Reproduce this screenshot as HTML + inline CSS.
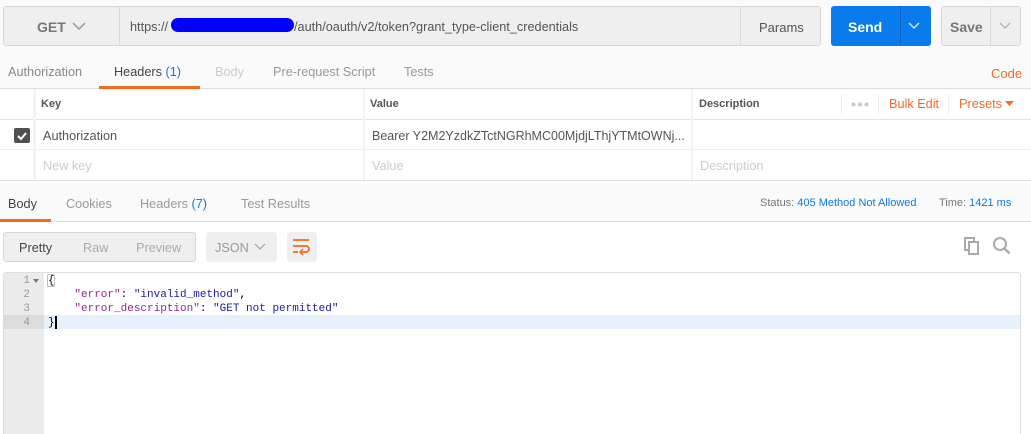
<!DOCTYPE html>
<html><head><style>
*{margin:0;padding:0;box-sizing:border-box}
body{width:1031px;height:434px;background:#fafafa;font-family:"Liberation Sans",sans-serif;font-size:12px;color:#505050;position:relative;overflow:hidden}
.a{position:absolute;white-space:nowrap}
.box{position:absolute;border:1px solid #d8d8d8;border-radius:3px;background:#efefef}
.mono{font-family:"Liberation Mono",monospace;font-size:11px}
</style></head><body>
<div class="box" style="left:3px;top:6px;width:818px;height:40px"></div>
<div class="a" style="left:119px;top:7px;width:1px;height:38px;background:#d8d8d8"></div>
<div class="a" style="left:740px;top:7px;width:1px;height:38px;background:#d8d8d8"></div>
<div class="a" style="left:37px;top:19px;font-size:14px;font-weight:bold;color:#777">GET</div>
<svg class="a" style="left:72px;top:22px" width="14" height="9"><path d="M1 1l6 6 6-6" stroke="#999" stroke-width="1.5" fill="none"/></svg>
<div class="a" style="left:130px;top:20px;font-size:12.7px;color:#555">https://</div>
<div class="a" style="left:171px;top:18px;width:123px;height:14px;background:#0000ff;border-radius:7px"></div>
<div class="a" style="left:294px;top:20px;font-size:12.7px;color:#555">/auth/oauth/v2/token?grant_type-client_credentials</div>
<div class="a" style="left:759px;top:20px;font-size:13px;color:#555">Params</div>
<div class="a" style="left:831px;top:6px;width:100px;height:40px;background:#097bed;border-radius:3px"></div>
<div class="a" style="left:900px;top:6px;width:1px;height:40px;background:#0a63c0"></div>
<div class="a" style="left:848px;top:19px;font-size:14px;font-weight:bold;color:#fff">Send</div>
<svg class="a" style="left:908px;top:22px" width="12" height="8"><path d="M1 1l5 5 5-5" stroke="#cfe3fb" stroke-width="1.5" fill="none"/></svg>
<div class="box" style="left:941px;top:6px;width:80px;height:40px"></div>
<div class="a" style="left:990px;top:7px;width:1px;height:38px;background:#d8d8d8"></div>
<div class="a" style="left:950px;top:19px;font-size:14px;font-weight:bold;color:#777">Save</div>
<svg class="a" style="left:999px;top:22px" width="12" height="8"><path d="M1 1l5 5 5-5" stroke="#aaa" stroke-width="1.2" fill="none"/></svg>
<div class="a" style="left:8px;top:65px;font-size:12.7px;color:#888">Authorization</div>
<div class="a" style="left:114px;top:65px;font-size:12.7px;color:#444">Headers <span style="color:#097bed">(1)</span></div>
<div class="a" style="left:215px;top:65px;font-size:12.7px;color:#ccc">Body</div>
<div class="a" style="left:273px;top:65px;font-size:12.7px;color:#999">Pre-request Script</div>
<div class="a" style="left:404px;top:65px;font-size:12.7px;color:#999">Tests</div>
<div class="a" style="left:991px;top:66px;font-size:13px;color:#f26b21">Code</div>
<div class="a" style="left:0;top:88px;width:1031px;height:1px;background:#ddd"></div>
<div class="a" style="left:99px;top:86px;width:101px;height:3px;background:#f26b21"></div>
<div class="a" style="left:0;top:89px;width:1031px;height:91px;background:#fff"></div>
<div class="a" style="left:0;top:119px;width:1031px;height:1px;background:#e3e3e3"></div>
<div class="a" style="left:0;top:149px;width:1031px;height:1px;background:#eee"></div>
<div class="a" style="left:0;top:180px;width:1031px;height:1px;background:#e3e3e3"></div>
<div class="a" style="left:33px;top:89px;width:3px;height:91px;background:#f4f4f4"></div>
<div class="a" style="left:363px;top:89px;width:2px;height:91px;background:#f4f4f4"></div>
<div class="a" style="left:691px;top:89px;width:2px;height:91px;background:#f4f4f4"></div>
<div class="a" style="left:41px;top:98px;font-size:11px;font-weight:bold;color:#555">Key</div>
<div class="a" style="left:370px;top:98px;font-size:11px;font-weight:bold;color:#555">Value</div>
<div class="a" style="left:699px;top:98px;font-size:11px;font-weight:bold;color:#555">Description</div>
<div class="a" style="left:841px;top:95px;width:1px;height:20px;background:#eee"></div>
<div class="a" style="left:878px;top:95px;width:1px;height:20px;background:#eee"></div>
<div class="a" style="left:948px;top:95px;width:1px;height:20px;background:#eee"></div>
<svg class="a" style="left:851px;top:102px" width="18" height="5"><circle cx="2.5" cy="2.5" r="2" fill="#c8c8c8"/><circle cx="9" cy="2.5" r="2" fill="#c8c8c8"/><circle cx="15.5" cy="2.5" r="2" fill="#c8c8c8"/></svg>
<div class="a" style="left:889px;top:97px;font-size:12.7px;color:#f26b21">Bulk Edit</div>
<div class="a" style="left:959px;top:97px;font-size:12.7px;color:#f26b21">Presets</div>
<svg class="a" style="left:1005px;top:101px" width="9" height="6"><path d="M0 0h9l-4.5 5z" fill="#f26b21"/></svg>
<div class="a" style="left:14px;top:128px;width:16px;height:15px;background:#505050;border-radius:2px"></div>
<svg class="a" style="left:14px;top:128px" width="16" height="15"><path d="M4 8l3 3 5-6" stroke="#fff" stroke-width="2" fill="none"/></svg>
<div class="a" style="left:43px;top:129px;font-size:12.7px;color:#555">Authorization</div>
<div class="a" style="left:372px;top:129px;font-size:12.5px;color:#555">Bearer Y2M2YzdkZTctNGRhMC00MjdjLThjYTMtOWNj...</div>
<div class="a" style="left:43px;top:159px;font-size:12.7px;color:#ccc">New key</div>
<div class="a" style="left:372px;top:159px;font-size:12.7px;color:#ccc">Value</div>
<div class="a" style="left:700px;top:159px;font-size:12.7px;color:#ccc">Description</div>
<div class="a" style="left:8px;top:197px;font-size:12.7px;color:#444">Body</div>
<div class="a" style="left:66px;top:197px;font-size:12.7px;color:#999">Cookies</div>
<div class="a" style="left:140px;top:197px;font-size:12.7px;color:#999">Headers <span style="color:#097bed">(7)</span></div>
<div class="a" style="left:241px;top:197px;font-size:12.7px;color:#999">Test Results</div>
<div class="a" style="left:760px;top:197px;font-size:11px;color:#777">Status: <span style="color:#097bed">405 Method Not Allowed</span></div>
<div class="a" style="left:939px;top:197px;font-size:11px;color:#777">Time: <span style="color:#097bed">1421 ms</span></div>
<div class="a" style="left:0;top:221px;width:1031px;height:1px;background:#ddd"></div>
<div class="a" style="left:0;top:219px;width:51px;height:3px;background:#f26b21"></div>
<div class="a" style="left:0;top:222px;width:1031px;height:212px;background:#fff"></div>
<div class="box" style="left:3px;top:232px;width:193px;height:30px"></div>
<div class="a" style="left:19px;top:241px;font-size:12.7px;color:#444">Pretty</div>
<div class="a" style="left:83px;top:241px;font-size:12.7px;color:#aaa">Raw</div>
<div class="a" style="left:136px;top:241px;font-size:12.7px;color:#aaa">Preview</div>
<div class="a" style="left:206px;top:232px;width:71px;height:30px;background:#efefef;border-radius:3px"></div>
<div class="a" style="left:215px;top:241px;font-size:12.7px;color:#999">JSON</div>
<svg class="a" style="left:254px;top:243px" width="12" height="8"><path d="M1 1l5 5 5-5" stroke="#aaa" stroke-width="1.3" fill="none"/></svg>
<div class="a" style="left:287px;top:232px;width:30px;height:30px;background:#efefef;border-radius:3px"></div>
<svg class="a" style="left:292px;top:237px" width="20" height="20"><path d="M1 3h16M1 9h13a3 3 0 0 1 0 6h-5M1 15h5" stroke="#f26b21" stroke-width="1.8" fill="none"/><path d="M11 12l-3 3 3 3" stroke="#f26b21" stroke-width="1.5" fill="none"/></svg>
<svg class="a" style="left:964px;top:237px" width="16" height="18"><rect x="1" y="1" width="9" height="12" fill="none" stroke="#aaa" stroke-width="2"/><rect x="5" y="5" width="9" height="12" fill="#fff" stroke="#aaa" stroke-width="2"/></svg>
<svg class="a" style="left:992px;top:236px" width="20" height="20"><circle cx="8" cy="8" r="6" fill="none" stroke="#aaa" stroke-width="2"/><path d="M12.5 12.5l5 5" stroke="#aaa" stroke-width="2.5"/></svg>
<div class="a" style="left:3px;top:272px;width:1018px;height:162px;border:1px solid #ddd;border-bottom:none;border-radius:3px 3px 0 0;background:#fff"></div>
<div class="a" style="left:4px;top:273px;width:40px;height:161px;background:#ebebeb"></div>
<div class="a" style="left:4px;top:315px;width:40px;height:14px;background:#dcdcdc"></div>
<div class="a" style="left:44px;top:315px;width:976px;height:14px;background:#e8f2fe"></div>
<div class="a mono" style="left:18px;top:274px;line-height:14px;color:#999;text-align:right;width:12px">1<br>2<br>3<br>4</div>
<svg class="a" style="left:33px;top:279px" width="6" height="4"><path d="M0 0h6l-3 4z" fill="#777"/></svg>
<div class="a mono" style="left:48px;top:274px;line-height:14px;color:#000">{<br>&nbsp;&nbsp;&nbsp;&nbsp;<span style="color:#92278f">"error"</span>: <span style="color:#1a1aa6">"invalid_method"</span>,<br>&nbsp;&nbsp;&nbsp;&nbsp;<span style="color:#92278f">"error_description"</span>: <span style="color:#1a1aa6">"GET not permitted"</span><br>}</div>
<div class="a" style="left:47px;top:274px;width:8px;height:13px;border:1px solid #bbb;border-radius:2px"></div>
<div class="a" style="left:55px;top:316px;width:2px;height:13px;background:#000"></div>
</body></html>
